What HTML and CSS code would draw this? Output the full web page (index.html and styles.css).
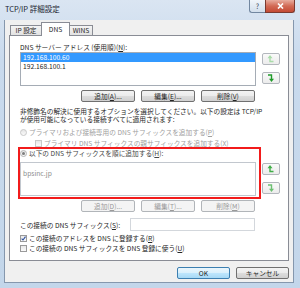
FILE: index.html
```html
<!DOCTYPE html>
<html lang="ja">
<head>
    <meta charset="UTF-8">
    <title>TCP/IP 詳細設定</title>
    <link rel="stylesheet" href="styles.css">
</head>
<body>
<div class="window">
    <div class="titlebar">
        <span class="title">TCP/IP 詳細設定</span>
        <div class="caption">
            <span class="cap help">?</span>
            <span class="cap close">
                <svg width="7" height="6" viewBox="0 0 7 6"><path d="M1 0.5 L6 5.5 M6 0.5 L1 5.5" stroke="#fff" stroke-width="1.6"/></svg>
            </span>
        </div>
    </div>
    <div class="client">
        <div class="tabs">
            <span class="tab tab-ip">IP 設定</span>
            <span class="tab tab-dns active">DNS</span>
            <span class="tab tab-wins">WINS</span>
        </div>
        <div class="panel">
            <div class="label">DNS サーバー アドレス (使用順)(<u>N</u>):</div>
            <div class="list-row">
                <ul class="listbox">
                    <li class="selected">192.168.100.60</li>
                    <li>192.168.100.1</li>
                </ul>
                <div class="arrows">
                    <span class="arrow-btn">
                        <svg width="8" height="8" viewBox="0 0 8 8"><path d="M3 1.5 V6.5 H6.5" fill="none" stroke="#a8dca8" stroke-width="1.4"/><path d="M0.5 3.2 L3 0 L5.5 3.2 Z" fill="#a8dca8"/></svg>
                    </span>
                    <span class="arrow-btn">
                        <svg width="8" height="8" viewBox="0 0 8 8"><path d="M1 1 H4.5 V6" fill="none" stroke="#1f9b2a" stroke-width="1.4"/><path d="M2 4.8 L4.5 8 L7 4.8 Z" fill="#1f9b2a"/></svg>
                    </span>
                </div>
            </div>
            <div class="btn-row">
                <button class="btn">追加(<u>A</u>)...</button>
                <button class="btn">編集(<u>E</u>)...</button>
                <button class="btn">削除(<u>V</u>)</button>
            </div>
            <p class="note">非修飾名の解決に使用するオプションを選択してください。以下の設定は TCP/IP が使用可能になっている接続すべてに適用されます:</p>
            <div class="opt disabled opt-first">
                <span class="radio"></span>
                <span>プライマリおよび接続専用の DNS サフィックスを追加する(<u>P</u>)</span>
            </div>
            <div class="opt disabled opt-sub">
                <span class="check"></span>
                <span>プライマリ DNS サフィックスの親サフィックスを追加する(<u>X</u>)</span>
            </div>
            <div class="opt opt-radio2">
                <span class="radio on"></span>
                <span>以下の DNS サフィックスを順に追加する(<u>H</u>):</span>
            </div>
            <div class="list-row list-row2">
                <ul class="listbox light">
                    <li class="muted">bpsinc.jp</li>
                </ul>
                <div class="arrows">
                    <span class="arrow-btn">
                        <svg width="8" height="8" viewBox="0 0 8 8"><path d="M3 1.5 V6.5 H6.5" fill="none" stroke="#3fae47" stroke-width="1.4"/><path d="M0.5 3.2 L3 0 L5.5 3.2 Z" fill="#3fae47"/></svg>
                    </span>
                    <span class="arrow-btn">
                        <svg width="8" height="8" viewBox="0 0 8 8"><path d="M1 1 H4.5 V6" fill="none" stroke="#6cc072" stroke-width="1.4"/><path d="M2 4.8 L4.5 8 L7 4.8 Z" fill="#6cc072"/></svg>
                    </span>
                </div>
            </div>
            <div class="btn-row">
                <button class="btn off">追加(<u>D</u>)...</button>
                <button class="btn off">編集(<u>T</u>)...</button>
                <button class="btn off">削除(<u>M</u>)</button>
            </div>
            <div class="suffix-row">
                <span class="suffix-label">この接続の DNS サフィックス(<u>S</u>):</span>
                <span class="textbox"></span>
            </div>
            <div class="opt opt-reg">
                <span class="check">
                    <svg width="5" height="5" viewBox="0 0 5 5"><path d="M0.6 2.6 L2 4 L4.5 0.6" fill="none" stroke="#2c4f9e" stroke-width="1.1"/></svg>
                </span>
                <span>この接続のアドレスを DNS に登録する(<u>R</u>)</span>
            </div>
            <div class="opt opt-use">
                <span class="check"></span>
                <span>この接続の DNS サフィックスを DNS 登録に使う(<u>U</u>)</span>
            </div>
        </div>
        <div class="footer">
            <button class="btn default">OK</button>
            <button class="btn">キャンセル</button>
        </div>
    </div>
    <div class="highlight"></div>
</div>
</body>
</html>
```

FILE: styles.css
```css
* {
    margin: 0;
    padding: 0;
    box-sizing: border-box;
    list-style: none;
}

body {
    width: 300px;
    height: 288px;
    overflow: hidden;
    font-family: "Noto Sans CJK JP", "Noto Sans", sans-serif;
    font-size: 6.7px;
    color: #262626;
}

u {
    text-decoration: underline;
    text-underline-offset: 1px;
}

.window {
    position: relative;
    width: 300px;
    height: 288px;
    background: linear-gradient(#dae5f2, #c9daed 60px, #c3d6ea);
}

.titlebar {
    display: flex;
    height: 20px;
}

.title {
    flex: 1;
    padding: 4px 0 0 5px;
    font-size: 7.5px;
    line-height: 9px;
    color: #1b2430;
}

.caption {
    display: flex;
    margin-right: 5px;
}

.cap {
    display: flex;
    align-items: center;
    justify-content: center;
    height: 13px;
    border: 1px solid #7287a0;
    border-top: none;
}

.cap.help {
    width: 16px;
    border-right: none;
    border-radius: 0 0 0 3px;
    background: linear-gradient(#f1f5fa, #d3dfec);
    font-size: 7px;
    color: #3a4656;
}

.cap.close {
    width: 30px;
    border-color: #7a3a30;
    border-radius: 0 0 3px 0;
    background: linear-gradient(#e8ad9f, #d26a55 50%, #c44a34);
}

.client {
    width: 290px;
    height: 263px;
    margin-left: 4px;
    padding: 2px 4px 0;
    background: #f0f0f0;
    border: 1px solid #8597ad;
    border-top: none;
}

/* tabs */
.tabs {
    display: flex;
    align-items: flex-end;
    height: 13px;
    margin-left: 1px;
}

.tab {
    height: 10px;
    border: 1px solid #898c95;
    border-bottom: none;
    background: linear-gradient(#f4f4f4, #e2e2e2);
    line-height: 9px;
    text-align: center;
}

.tab + .tab {
    margin-left: -1px;
}

.tab-ip {
    width: 32px;
}

.tab-dns {
    width: 29px;
}

.tab-wins {
    width: 24px;
}

.tab.active {
    position: relative;
    height: 14px;
    margin-bottom: -1px;
    background: #fff;
    line-height: 12px;
}

.panel {
    width: 280px;
    height: 226px;
    padding: 7px 0 0 10px;
    background: #fff;
    border: 1px solid #898c95;
}

.label {
    line-height: 8px;
}

.list-row {
    display: flex;
    gap: 6px;
    margin-top: 1px;
}

.listbox {
    width: 236px;
    height: 34px;
    border: 1px solid #a5acb5;
    line-height: 9px;
}

.listbox.light {
    border-color: #c2c7ce;
}

.listbox li {
    padding-left: 2px;
}

.listbox .selected {
    background: #3399ff;
    color: #fff;
}

.listbox .muted {
    margin-top: 6px;
    color: #8c8c8c;
}

.arrows {
    display: flex;
    flex-direction: column;
    gap: 7px;
    padding-top: 1px;
}

.arrow-btn {
    display: flex;
    align-items: center;
    justify-content: center;
    width: 18px;
    height: 12px;
    border: 1px solid #b3b7bd;
    border-radius: 2px;
    background: linear-gradient(#fafafa, #ececec);
}

.btn-row {
    display: flex;
    gap: 6px;
    margin: 4px 0 0 61px;
}

.btn {
    width: 54px;
    height: 12px;
    border: 1px solid #707070;
    border-radius: 2px;
    background: linear-gradient(#f3f3f3, #ebebeb 50%, #dddddd 50%, #d0d0d0);
    font: inherit;
    line-height: 9px;
    color: #262626;
    text-align: center;
}

.btn.off {
    border-color: #b1b5b9;
    background: #f4f4f4;
    color: #9a9a9a;
}

.btn.default {
    border-color: #3c7fb1;
    background: linear-gradient(#eaf6fd, #d9f0fc 50%, #bee6fd 50%, #a7d9f5);
}

.note {
    width: 250px;
    margin-top: 5px;
    line-height: 8px;
}

.opt {
    display: flex;
    align-items: center;
    gap: 2px;
    line-height: 8px;
}

.opt.disabled {
    color: #a0a0a0;
}

.opt-first {
    margin-top: 5px;
}

.opt-sub {
    margin: 3px 0 0 15px;
}

.opt-radio2 {
    margin-top: 2px;
    color: #444;
}

.opt-reg {
    margin-top: 3px;
}

.opt-use {
    margin-top: 2px;
}

.radio {
    position: relative;
    width: 7px;
    height: 7px;
    border: 1px solid #b5b5b5;
    border-radius: 50%;
    background: linear-gradient(#e6e6e6, #fafafa);
}

.radio.on::after {
    content: "";
    position: absolute;
    left: 1px;
    top: 1px;
    width: 3px;
    height: 3px;
    border-radius: 50%;
    background: #7d7d7d;
}

.check {
    display: flex;
    align-items: center;
    justify-content: center;
    width: 7px;
    height: 7px;
    border: 1px solid #9a9a9a;
    background: linear-gradient(#e8e8e8, #fbfbfb);
}

.opt.disabled .check,
.opt.disabled .radio {
    border-color: #c8c8c8;
}

.list-row2 {
    margin-top: 5px;
}

.suffix-row {
    display: flex;
    align-items: center;
    margin-top: 6px;
}

.suffix-label {
    width: 110px;
    line-height: 8px;
}

.textbox {
    width: 125px;
    height: 13px;
    border: 1px solid #d3d7dc;
    background: #fff;
}

.footer {
    display: flex;
    justify-content: flex-end;
    gap: 6px;
    margin-top: 6px;
}

.footer .btn {
    width: 53px;
}

/* annotation */
.highlight {
    position: absolute;
    left: 18px;
    top: 147px;
    width: 243px;
    height: 52px;
    border: 2px solid #f21b1b;
}
```
